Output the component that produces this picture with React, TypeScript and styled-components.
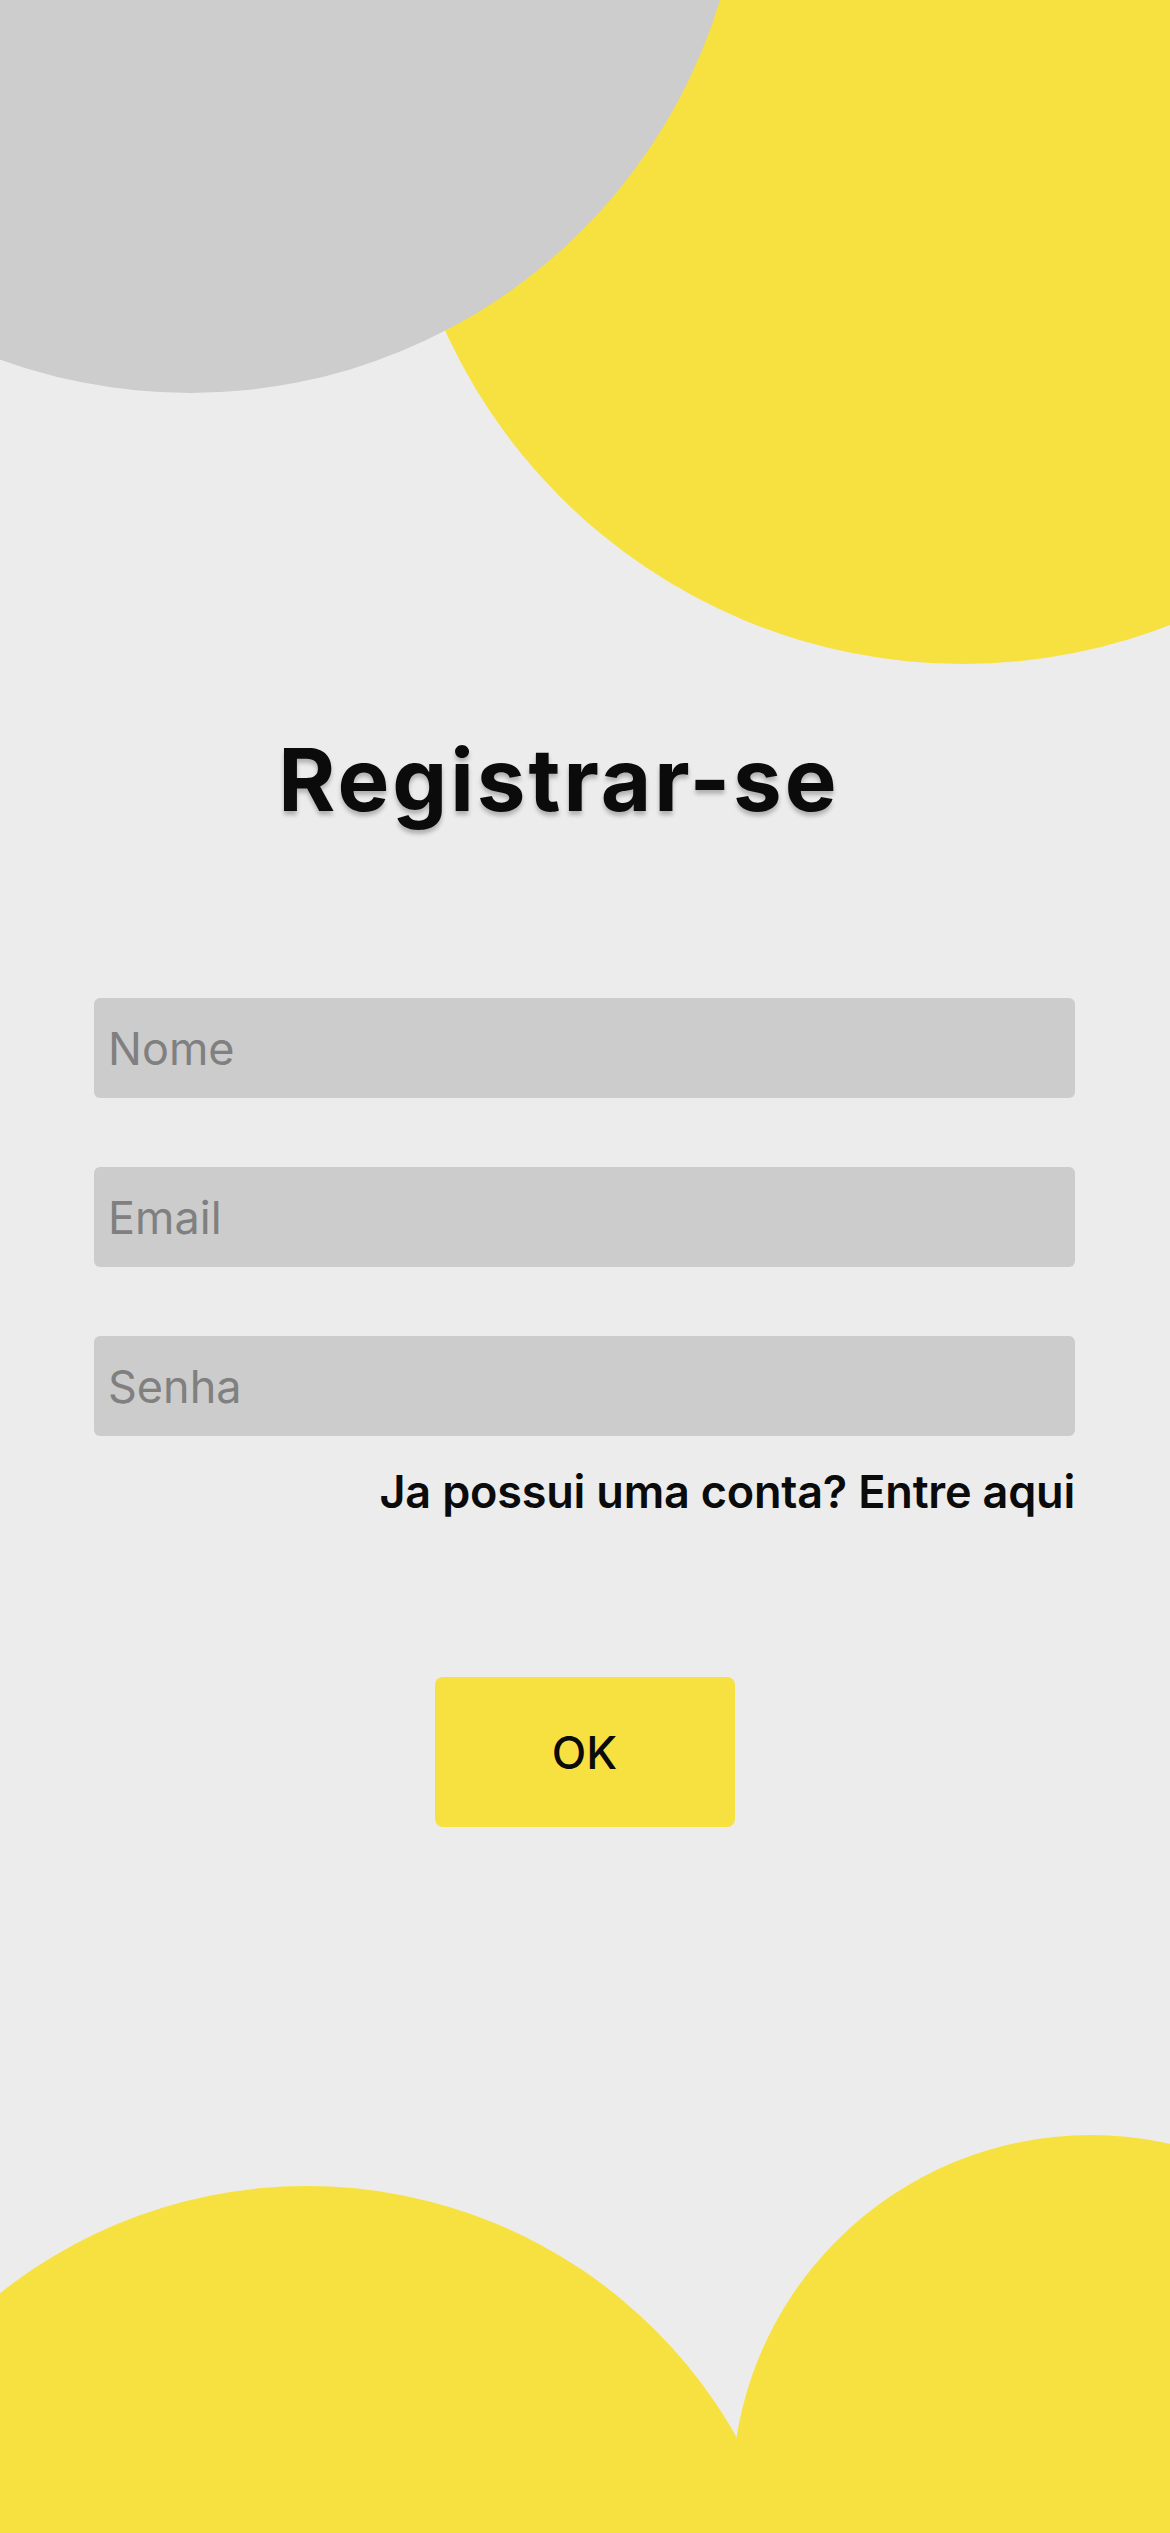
import React from "react";
import styled, { createGlobalStyle } from "styled-components";

const GlobalStyle = createGlobalStyle`
  html, body {
    margin: 0;
    padding: 0;
    background: #ececec;
  }
  * { box-sizing: border-box; }
`;

const Page = styled.main`
  position: relative;
  width: 100%;
  min-height: 100vh;
  overflow: hidden;
  background: #ececec;
  font-family: "Inter", "Liberation Sans", sans-serif;
  display: flex;
  flex-direction: column;
`;

const Blob = styled.div<{ $x: number; $y: number; $d: number; $color: string; $z: number }>`
  position: absolute;
  left: ${(p) => p.$x}px;
  top: ${(p) => p.$y}px;
  width: ${(p) => p.$d}px;
  height: ${(p) => p.$d}px;
  border-radius: 50%;
  background: ${(p) => p.$color};
  z-index: ${(p) => p.$z};
  pointer-events: none;
`;

const Content = styled.div`
  position: relative;
  z-index: 5;
  display: flex;
  flex-direction: column;
  padding-top: 736px;
`;

const Title = styled.h1`
  margin: 0;
  padding-right: 52px;
  text-align: center;
  font-family: "Inter", "Liberation Sans", sans-serif;
  font-weight: 700;
  font-size: 87px;
  line-height: 1;
  letter-spacing: 3px;
  color: #0b0b0b;
  text-shadow: 0 4px 4px rgba(0, 0, 0, 0.25);
`;

const Form = styled.form`
  display: flex;
  flex-direction: column;
  padding: 0 95px 0 94px;
  margin-top: 175px;
`;

const Fields = styled.div`
  display: flex;
  flex-direction: column;
  gap: 69px;
`;

const Input = styled.input`
  width: 100%;
  height: 100px;
  border: none;
  outline: none;
  border-radius: 6px;
  background: #cccccc;
  padding: 0 14px;
  font-family: "Inter", "Liberation Sans", sans-serif;
  font-size: 45px;
  color: #222;
  &::placeholder {
    color: #808080;
    opacity: 1;
  }
`;

const LoginLink = styled.a`
  align-self: flex-end;
  margin-top: 29px;
  font-family: "Inter", "Liberation Sans", sans-serif;
  font-weight: 600;
  font-size: 45px;
  line-height: 54px;
  letter-spacing: -0.2px;
  color: #0b0b0b;
  text-decoration: none;
  cursor: pointer;
`;

const Submit = styled.button`
  align-self: center;
  margin-top: 158px;
  width: 300px;
  height: 150px;
  border: none;
  border-radius: 8px;
  background: #f7e141;
  font-family: "Inter", "Liberation Sans", sans-serif;
  font-weight: 500;
  font-size: 45px;
  color: #0b0b0b;
  cursor: pointer;
`;

export default function App() {
  return (
    <>
      <GlobalStyle />
      <Page>
        <Blob $x={394} $y={-474} $d={1138} $color="#f7e141" $z={1} />
        <Blob $x={-364} $y={-715} $d={1108} $color="#cdcdcd" $z={2} />
        <Blob $x={-186} $y={2186} $d={986} $color="#f7e141" $z={1} />
        <Blob $x={732} $y={2135} $d={718} $color="#f7e141" $z={1} />
        <Content>
          <Title>Registrar-se</Title>
          <Form onSubmit={(e) => e.preventDefault()}>
            <Fields>
              <Input type="text" placeholder="Nome" />
              <Input type="email" placeholder="Email" />
              <Input type="password" placeholder="Senha" />
            </Fields>
            <LoginLink>Ja possui uma conta? Entre aqui</LoginLink>
            <Submit type="submit">OK</Submit>
          </Form>
        </Content>
      </Page>
    </>
  );
}
